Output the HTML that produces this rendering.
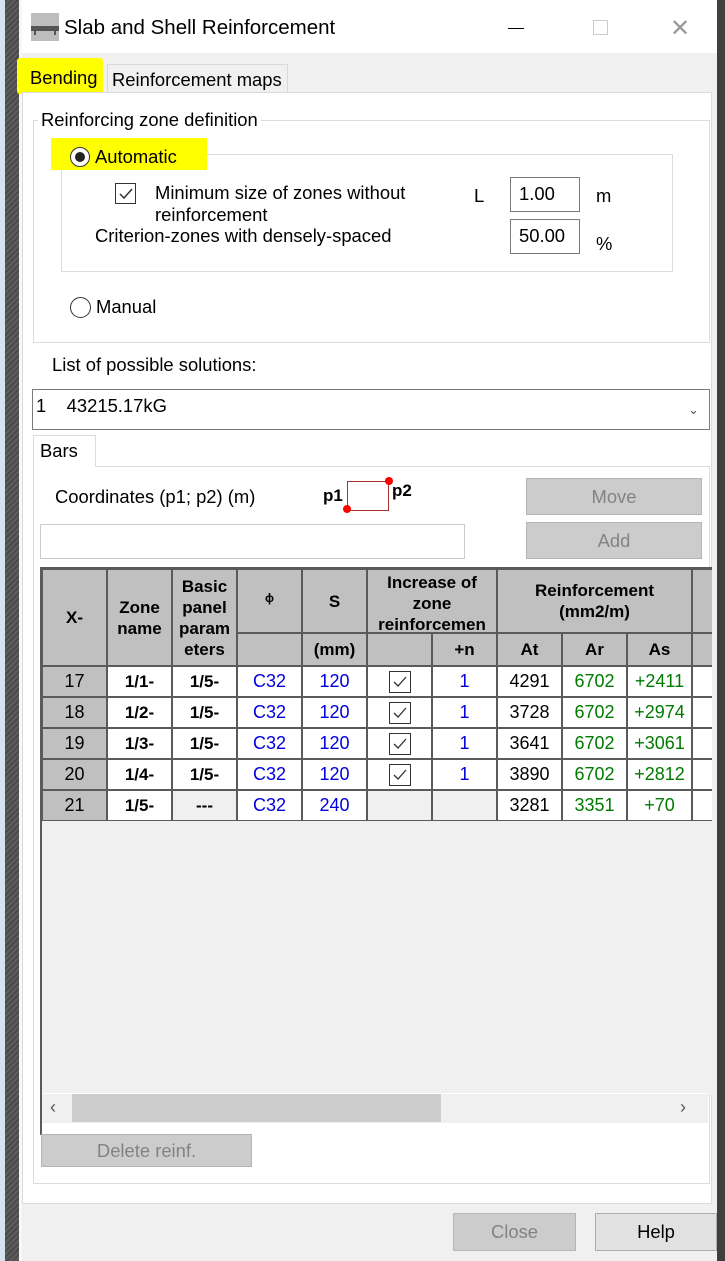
<!DOCTYPE html>
<html><head><meta charset="utf-8"><style>
*{box-sizing:border-box;margin:0;padding:0}
body{width:725px;height:1261px;position:relative;overflow:hidden;background:#f0f0f0;font-family:"Liberation Sans",sans-serif;font-size:18.4px;color:#000}
.a{position:absolute}
.c{position:absolute;display:flex;align-items:center;justify-content:center;text-align:center;font-weight:bold;font-size:17px;line-height:21px;overflow:hidden;white-space:nowrap}
.h{background:#c0c0c0}
.w{background:#fff;font-weight:bold}
.n{font-weight:normal;font-size:18px}
.bl{color:#0000e0}
.gr{color:#007a00}
.btn{position:absolute;background:#cccccc;border:1px solid #b5b5b5;color:#838383;display:flex;align-items:center;justify-content:center}
.cb{width:22px;height:22px;border:1px solid #333;background:#fff;display:flex;align-items:center;justify-content:center}
</style></head><body>
<div class="a" style="left:0;top:0;width:5px;height:1261px;background:#d6e2ef"></div>
<div class="a" style="left:5px;top:0;width:14px;height:1261px;background:repeating-linear-gradient(135deg,#4a4a4a 0 2px,#5e5e5e 2px 4px)"></div>
<div class="a" style="left:19px;top:0;width:3px;height:1261px;background:#f7f7f7"></div>
<div class="a" style="left:717px;top:0;width:8px;height:1261px;background:#3f3f3f"></div>
<div class="a" style="left:22px;top:0;width:695px;height:53px;background:#fff"></div>
<div class="a" style="left:31px;top:13px;width:28px;height:28px;background:#bdbdbd"></div>
<div class="a" style="left:31px;top:26px;width:28px;height:5px;background:#555"></div>
<div class="a" style="left:34px;top:31px;width:2px;height:4px;background:#555"></div>
<div class="a" style="left:54px;top:31px;width:2px;height:4px;background:#555"></div>
<div class="a" style="left:64px;top:16px;font-size:20.5px">Slab and Shell Reinforcement</div>
<div class="a" style="left:508px;top:28px;width:16px;height:1px;background:#000"></div>
<div class="a" style="left:593px;top:20px;width:15px;height:15px;border:1px solid #ccc"></div>
<div class="a" style="left:670px;top:14px;font-size:24px;color:#999;font-weight:100">✕</div>
<div class="a" style="left:107px;top:64px;width:181px;height:29px;border:1px solid #d9d9d9;border-bottom:none;background:#f0f0f0"></div>
<div class="a" style="left:17px;top:58px;width:86px;height:36px;background:#ffff00;border-radius:3px"></div>
<div class="a" style="left:30px;top:67px">Bending</div>
<div class="a" style="left:112px;top:69px">Reinforcement maps</div>
<div class="a" style="left:22px;top:92px;width:690px;height:1112px;background:#fff;border:1px solid #dcdcdc"></div>
<div class="a" style="left:33px;top:120px;width:677px;height:223px;border:1px solid #dcdcdc"></div>
<div class="a" style="left:38px;top:109px;background:#fff;padding:0 3px">Reinforcing zone definition</div>
<div class="a" style="left:61px;top:154px;width:612px;height:118px;border:1px solid #dcdcdc"></div>
<div class="a" style="left:51px;top:138px;width:156px;height:32px;background:#ffff00"></div>
<div class="a" style="left:70px;top:147px;width:20px;height:20px;border:1px solid #333;border-radius:50%;background:#fff"></div>
<div class="a" style="left:75px;top:152px;width:10px;height:10px;border-radius:50%;background:#222"></div>
<div class="a" style="left:95px;top:146px">Automatic</div>
<div class="a cb" style="left:115px;top:183px;width:21px;height:21px"><svg width="14" height="12"><path d="M1 6 L5 10 L13 1" fill="none" stroke="#333" stroke-width="1.5"/></svg></div>
<div class="a" style="left:155px;top:182px;line-height:22px">Minimum size of zones without<br>reinforcement</div>
<div class="a" style="left:95px;top:225px">Criterion-zones with densely-spaced</div>
<div class="a" style="left:474px;top:185px">L</div>
<div class="a" style="left:510px;top:177px;width:70px;height:35px;border:1px solid #7a7a7a;padding:5px 8px">1.00</div>
<div class="a" style="left:510px;top:219px;width:70px;height:35px;border:1px solid #7a7a7a;padding:5px 8px">50.00</div>
<div class="a" style="left:596px;top:185px">m</div>
<div class="a" style="left:596px;top:233px">%</div>
<div class="a" style="left:70px;top:297px;width:21px;height:21px;border:1px solid #333;border-radius:50%;background:#fff"></div>
<div class="a" style="left:96px;top:296px">Manual</div>
<div class="a" style="left:52px;top:354px">List of possible solutions:</div>
<div class="a" style="left:32px;top:389px;width:678px;height:41px;border:1px solid #7a7a7a;background:#fff"></div>
<div class="a" style="left:36px;top:395px">1&nbsp;&nbsp;&nbsp;&nbsp;43215.17kG</div>
<div class="a" style="left:688px;top:402px;font-size:13px;color:#555">&#8964;</div>
<div class="a" style="left:33px;top:435px;width:63px;height:32px;border:1px solid #dcdcdc;border-bottom:none;background:#fff;z-index:2"></div>
<div class="a" style="left:40px;top:440px;z-index:3">Bars</div>
<div class="a" style="left:33px;top:466px;width:677px;height:718px;border:1px solid #dcdcdc"></div>
<div class="a" style="left:55px;top:486px">Coordinates (p1; p2) (m)</div>
<div class="a" style="left:323px;top:486px;font-weight:bold;font-size:17px">p1</div>
<div class="a" style="left:392px;top:481px;font-weight:bold;font-size:17px">p2</div>
<div class="a" style="left:347px;top:481px;width:42px;height:30px;border:1px solid #a83030"></div>
<div class="a" style="left:343px;top:505px;width:8px;height:8px;border-radius:50%;background:#f00"></div>
<div class="a" style="left:385px;top:477px;width:8px;height:8px;border-radius:50%;background:#f00"></div>
<div class="btn" style="left:526px;top:478px;width:176px;height:37px">Move</div>
<div class="btn" style="left:526px;top:522px;width:176px;height:37px">Add</div>
<div class="a" style="left:40px;top:524px;width:425px;height:35px;border:1px solid #ccc"></div>
<div class="a" style="left:40px;top:567px;width:672px;height:528px;background:#f0f0f0"></div>
<div class="a" style="left:40px;top:567px;width:672px;height:254px;background:#5a5a5a"></div>
<div class="a" style="left:40px;top:567px;width:2px;height:568px;background:#5a5a5a"></div>
<div class="c h" style="left:43px;top:570px;width:63px;height:95px">X-</div>
<div class="c h" style="left:108px;top:570px;width:63px;height:95px">Zone<br>name</div>
<div class="c h" style="left:173px;top:570px;width:63px;height:95px">Basic<br>panel<br>param<br>eters</div>
<div class="c h" style="left:238px;top:570px;width:63px;height:62px;align-items:flex-start;padding-top:18px;font-size:12px">&#981;</div>
<div class="c h" style="left:238px;top:634px;width:63px;height:31px"></div>
<div class="c h" style="left:303px;top:570px;width:63px;height:62px">S</div>
<div class="c h" style="left:303px;top:634px;width:63px;height:31px">(mm)</div>
<div class="c h" style="left:368px;top:570px;width:128px;height:62px;align-items:flex-start;padding-top:2px">Increase of<br>zone<br>reinforcemen</div>
<div class="c h" style="left:368px;top:634px;width:63px;height:31px"></div>
<div class="c h" style="left:433px;top:634px;width:63px;height:31px">+n</div>
<div class="c h" style="left:498px;top:570px;width:193px;height:62px">Reinforcement<br>(mm2/m)</div>
<div class="c h" style="left:498px;top:634px;width:63px;height:31px">At</div>
<div class="c h" style="left:563px;top:634px;width:63px;height:31px">Ar</div>
<div class="c h" style="left:628px;top:634px;width:63px;height:31px">As</div>
<div class="c h" style="left:693px;top:570px;width:19px;height:62px"></div>
<div class="c h" style="left:693px;top:634px;width:19px;height:31px"></div>
<div id="rows"></div>
<script>
var d=[["17","1/1-","1/5-","C32","120",1,"4291","6702","+2411"],["18","1/2-","1/5-","C32","120",1,"3728","6702","+2974"],["19","1/3-","1/5-","C32","120",1,"3641","6702","+3061"],["20","1/4-","1/5-","C32","120",1,"3890","6702","+2812"],["21","1/5-","---","C32","240",0,"3281","3351","+70"]];
var h="";
d.forEach(function(r,i){var y=667+i*31;
function c(x,w,cls,t,bg){h+='<div class="c '+cls+'" style="left:'+x+'px;top:'+y+'px;width:'+w+'px;height:29px;'+(bg?'background:'+bg:'')+'">'+t+'</div>';}
c(43,63,"h n",r[0]);c(108,63,"w",r[1]);c(173,63,"w",r[2],i==4?"#f0f0f0":"");
c(238,63,"w n bl",r[3]);c(303,63,"w n bl",r[4]);
if(r[5]){c(368,63,"w",'<div class="cb" style="width:22px;height:22px"><svg width="14" height="12"><path d="M1 6 L5 10 L13 1" fill="none" stroke="#333" stroke-width="1.3"/></svg></div>');c(433,63,"w n bl","1");}
else{c(368,63,"w","",'#f0f0f0');c(433,63,"w","",'#f0f0f0');}
c(498,63,"w n",r[6]);c(563,63,"w n gr",r[7]);c(628,63,"w n gr",r[8]);c(693,19,"w","");
});
document.getElementById("rows").innerHTML=h;
</script>
<div class="a" style="left:42px;top:1093px;width:666px;height:30px;background:#f0f0f0;border-top:1px solid #fff"></div>
<div class="a" style="left:72px;top:1094px;width:369px;height:28px;background:#cdcdcd"></div>
<div class="a" style="left:50px;top:1097px;font-size:18px;color:#555">&#8249;</div>
<div class="a" style="left:680px;top:1097px;font-size:18px;color:#555">&#8250;</div>
<div class="btn" style="left:41px;top:1134px;width:211px;height:33px">Delete reinf.</div>
<div class="btn" style="left:453px;top:1213px;width:123px;height:38px">Close</div>
<div class="btn" style="left:595px;top:1213px;width:122px;height:38px;background:#e1e1e1;border-color:#adadad;color:#000">Help</div>
</body></html>
